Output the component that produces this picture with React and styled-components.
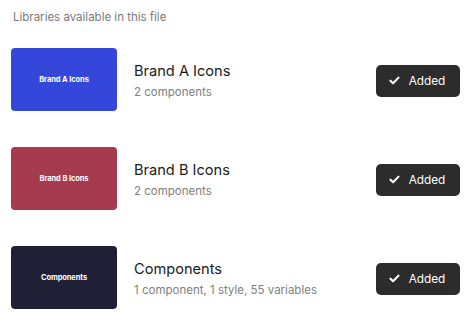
import styled, { createGlobalStyle } from "styled-components";

const GlobalStyle = createGlobalStyle`
  body {
    margin: 0;
    background: #ffffff;
    font-family: Inter, "Noto Sans", sans-serif;
  }
`;

const libraries = [
  { name: "Brand A Icons", meta: "2 components", color: "#3546db" },
  { name: "Brand B Icons", meta: "2 components", color: "#a63a4f" },
  { name: "Components", meta: "1 component, 1 style, 55 variables", color: "#1f2036" },
];

function CheckIcon() {
  return (
    <svg width="11" height="9" viewBox="0 0 12 10" fill="none">
      <path
        d="M1.5 5.2 L4.4 8 L10.5 1.8"
        stroke="#ffffff"
        strokeWidth="2.3"
        strokeLinecap="round"
        strokeLinejoin="round"
      />
    </svg>
  );
}

function App() {
  return (
    <>
      <GlobalStyle />
      <Page>
        <Heading>Libraries available in this file</Heading>
        <List>
          {libraries.map((lib) => (
            <Row key={lib.name}>
              <Thumb $bg={lib.color}>{lib.name}</Thumb>
              <Info>
                <Title>{lib.name}</Title>
                <Meta>{lib.meta}</Meta>
              </Info>
              <AddedButton>
                <CheckIcon />
                Added
              </AddedButton>
            </Row>
          ))}
        </List>
      </Page>
    </>
  );
}

const Page = styled.div`
  width: 474px;
  height: 326px;
  padding: 8px 14px 0 11px;
  box-sizing: border-box;
`;

const Heading = styled.div`
  font-size: 11.5px;
  color: #7a7a7a;
  line-height: 18px;
  padding-left: 2px;
`;

const List = styled.div`
  display: flex;
  flex-direction: column;
  gap: 36px;
  margin-top: 22px;
`;

const Row = styled.div`
  display: flex;
  align-items: center;
  height: 63px;
`;

const Thumb = styled.div`
  width: 106px;
  height: 63px;
  flex-shrink: 0;
  border-radius: 4px;
  background: ${(p) => p.$bg};
  color: #ffffff;
  font-size: 7.5px;
  font-weight: 700;
  letter-spacing: -0.1px;
  display: flex;
  align-items: center;
  justify-content: center;
`;

const Info = styled.div`
  flex: 1;
  display: flex;
  flex-direction: column;
  gap: 4px;
  margin-left: 17px;
  padding-top: 2px;
`;

const Title = styled.div`
  font-size: 14.6px;
  color: #1a1a1a;
  line-height: 18px;
`;

const Meta = styled.div`
  font-size: 11.5px;
  color: #808080;
  line-height: 16px;
`;

const AddedButton = styled.button`
  width: 84px;
  height: 32px;
  border: none;
  border-radius: 5px;
  background: #2c2c2c;
  color: #ffffff;
  font-family: Inter, "Noto Sans", sans-serif;
  font-size: 11.8px;
  display: flex;
  align-items: center;
  justify-content: center;
  gap: 9px;
  padding: 0 2px 0 0;
  margin-top: 2px;
`;

export default App;
